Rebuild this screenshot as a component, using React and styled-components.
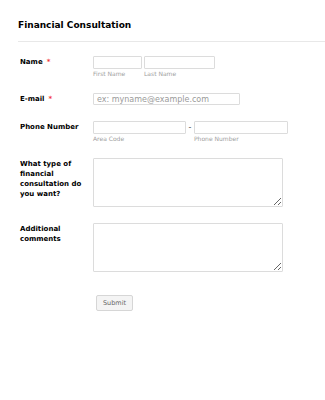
import React from 'react';
import styled, { createGlobalStyle } from 'styled-components';

const GlobalStyle = createGlobalStyle`
  html, body {
    margin: 0;
    padding: 0;
    background: #fff;
  }
  body {
    font-family: "DejaVu Sans", Verdana, sans-serif;
    color: #000;
  }
`;

const Page = styled.div`
  width: 325px;
  min-height: 400px;
`;

const Header = styled.div`
  margin-left: 18px;
  padding: 17px 0 8px;
  border-bottom: 1px solid #e8e8e8;
`;

const Title = styled.h1`
  margin: 0;
  font-size: 9px;
  line-height: 16px;
  font-weight: 700;
`;

const List = styled.div`
  padding-top: 6px;
`;

const Row = styled.div`
  display: grid;
  grid-template-columns: 73px 1fr;
  padding: 8px 0 8px 20px;
`;

const Label = styled.div`
  font-size: 7px;
  font-weight: 700;
  line-height: 10px;
  padding-top: ${(p) => p.$top || 1}px;
  padding-right: 6px;
`;

const Star = styled.span`
  color: #f23a3c;
  margin-left: 4px;
`;

const Fields = styled.div`
  display: flex;
  align-items: flex-start;
`;

const Field = styled.div`
  display: flex;
  flex-direction: column;
  margin-right: ${(p) => p.$gap || 0}px;
`;

const Input = styled.input`
  box-sizing: border-box;
  width: ${(p) => p.$w}px;
  height: ${(p) => p.$h || 13}px;
  margin: 0;
  padding: 0 3px;
  border: 1px solid #dcdcdc;
  border-radius: 1px;
  font-family: "DejaVu Sans", Verdana, sans-serif;
  font-size: 8px;
  outline: none;
  &::placeholder {
    color: #9a9a9a;
  }
`;

const Sub = styled.span`
  font-size: 6px;
  color: #a0a0a0;
  line-height: 7px;
  padding-top: 1px;
`;

const Dash = styled.span`
  font-size: 8px;
  line-height: 13px;
  width: 8px;
  text-align: center;
  color: #555;
`;

const Area = styled.textarea`
  box-sizing: border-box;
  width: 190px;
  height: 49px;
  margin: 0;
  border: 1px solid #dcdcdc;
  border-radius: 1px;
  resize: both;
  outline: none;
  display: block;
`;

const SubmitRow = styled.div`
  display: flex;
  padding: 15px 0 0 96px;
`;

const Submit = styled.button`
  box-sizing: border-box;
  width: 37px;
  height: 16px;
  padding: 0;
  background: #f4f4f4;
  border: 1px solid #d6d6d6;
  border-radius: 2px;
  font-family: "DejaVu Sans", Verdana, sans-serif;
  font-size: 6.5px;
  color: #666;
`;

export default function App() {
  return (
    <Page>
      <GlobalStyle />
      <Header>
        <Title>Financial Consultation</Title>
      </Header>
      <List>
        <Row>
          <Label>
            Name<Star>*</Star>
          </Label>
          <Fields>
            <Field $gap={2}>
              <Input $w={49} />
              <Sub>First Name</Sub>
            </Field>
            <Field>
              <Input $w={71} />
              <Sub>Last Name</Sub>
            </Field>
          </Fields>
        </Row>
        <Row>
          <Label>
            E-mail<Star>*</Star>
          </Label>
          <Fields>
            <Input $w={147} $h={12} placeholder="ex: myname@example.com" />
          </Fields>
        </Row>
        <Row>
          <Label>Phone Number</Label>
          <Fields>
            <Field>
              <Input $w={93} />
              <Sub>Area Code</Sub>
            </Field>
            <Dash>-</Dash>
            <Field>
              <Input $w={94} />
              <Sub>Phone Number</Sub>
            </Field>
          </Fields>
        </Row>
        <Row>
          <Label $top={0}>What type of financial consultation do you want?</Label>
          <Area />
        </Row>
        <Row>
          <Label $top={0}>Additional comments</Label>
          <Area />
        </Row>
      </List>
      <SubmitRow>
        <Submit>Submit</Submit>
      </SubmitRow>
    </Page>
  );
}
